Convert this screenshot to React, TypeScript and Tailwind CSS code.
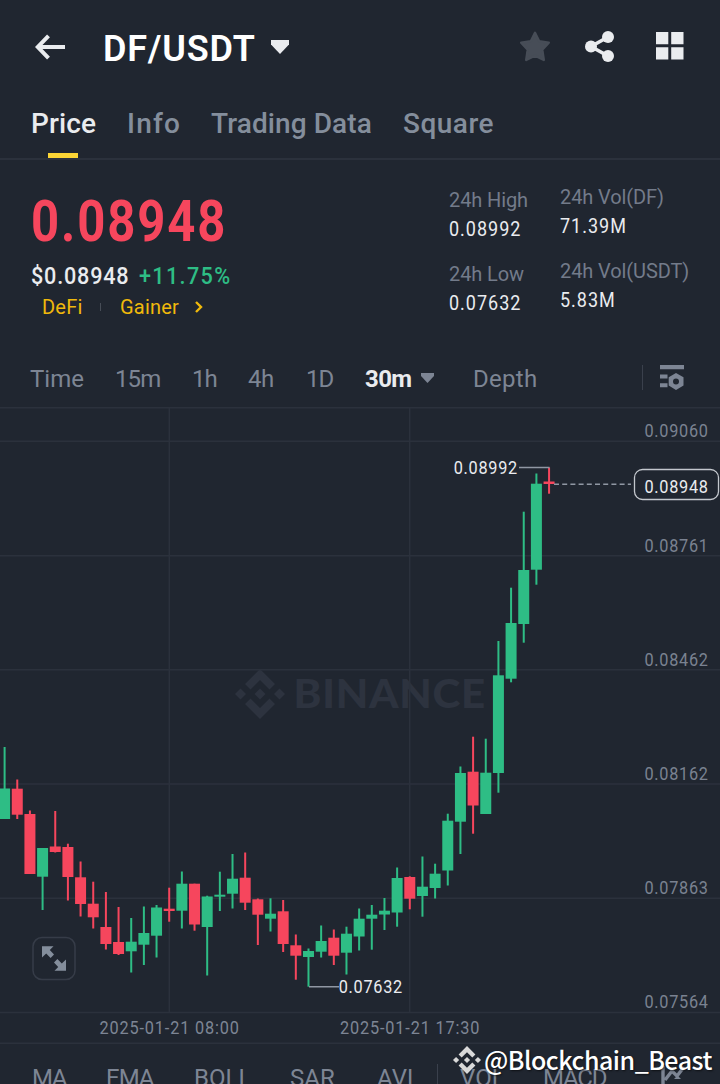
import React from "react";

const GREEN = "#2ebd85";
const RED = "#f6465d";

// direction, wick top, body top, body bottom, wick bottom
type Candle = ["g" | "r", number, number, number, number];

const candles: Candle[] = [
  ["g", 747, 788.5, 819, 819],
  ["r", 779.5, 788.7, 814.7, 819],
  ["r", 810.5, 814, 874, 874],
  ["g", 848, 848, 876.7, 910],
  ["r", 811, 846.5, 852, 852.5],
  ["r", 843.7, 847, 877, 900.5],
  ["r", 861.5, 877.3, 904, 916.5],
  ["r", 881.7, 903.7, 917.3, 928.5],
  ["r", 892, 927, 944, 949.5],
  ["r", 907, 942, 954, 955],
  ["g", 918, 941.7, 951.3, 972.5],
  ["g", 906.5, 933, 944.7, 965],
  ["g", 905, 907.5, 935.7, 957.5],
  ["r", 887.7, 908.7, 911, 921.7],
  ["g", 871.5, 883.7, 910.7, 928.5],
  ["r", 883.7, 883.7, 924.5, 930.7],
  ["g", 895.7, 896.5, 927, 975.5],
  ["g", 871.7, 894.7, 896.7, 911],
  ["g", 854, 878.7, 893.7, 908.5],
  ["r", 852.5, 877.7, 902.7, 910],
  ["r", 898.5, 899.3, 914.7, 945],
  ["g", 898.3, 913.7, 918.7, 931.5],
  ["r", 900, 911.3, 944, 952],
  ["r", 934.5, 945.3, 955.7, 979.7],
  ["g", 948.5, 951, 957, 986.7],
  ["g", 925.5, 941, 951.7, 957.5],
  ["r", 929.5, 937.7, 955.7, 965],
  ["g", 926.7, 933.7, 952.7, 974.5],
  ["g", 908.5, 918.7, 936.5, 950.5],
  ["g", 905, 914.7, 918.7, 949.7],
  ["g", 898, 910.7, 914.5, 930],
  ["g", 867.5, 878, 912.5, 926.7],
  ["r", 876.3, 877, 898.7, 909.3],
  ["g", 856.5, 886.7, 896, 916.7],
  ["g", 863.7, 873.7, 888, 898.5],
  ["g", 813.7, 820.7, 870.5, 885.5],
  ["g", 766.5, 773, 821.7, 854],
  ["r", 736.7, 771.7, 805.5, 833.7],
  ["g", 738.7, 772.7, 814, 814],
  ["g", 641, 675.3, 773, 792.7],
  ["g", 587.7, 623, 678.7, 682.3],
  ["g", 511.7, 570, 624, 642.7],
  ["g", 473.5, 483.7, 569.7, 584.7],
  ["r", 467.5, 481.5, 484, 493.7],
];

const priceLines = [
  { y: 441.3, label: "0.09060" },
  { y: 555.7, label: "0.08761" },
  { y: 669.8, label: "0.08462" },
  { y: 784, label: "0.08162" },
  { y: 898.3, label: "0.07863" },
  { y: 1012.5, label: "0.07564" },
];

function BinanceMark({ className }: { className?: string }) {
  return (
    <svg viewBox="0 0 50 50" className={className} fill="currentColor">
      <path d="M25 0 40 15 34.5 20.5 25 11 15.5 20.5 10 15Z" />
      <path d="M25 50 40 35 34.5 29.5 25 39 15.5 29.5 10 35Z" />
      <path d="M0 25 5.5 19.5 11 25 5.5 30.5Z" />
      <path d="M39 25 44.5 19.5 50 25 44.5 30.5Z" />
      <path d="M19.5 25 25 19.5 30.5 25 25 30.5Z" />
    </svg>
  );
}

function Header() {
  return (
    <div className="flex h-[94px] items-center pl-[35px] pr-[36px]">
      <svg width="30" height="26" viewBox="0 0 30 26" fill="none" stroke="#eaecef" strokeWidth="4">
        <path d="M30 13H3M13.5 1.8 2.7 13 13.5 24.2" />
      </svg>
      <h1 className="ml-[38px] w-[153px] whitespace-nowrap pt-[3px] text-[36px] font-semibold leading-[40px] tracking-[0.8px] text-white">
        DF/USDT
      </h1>
      <svg className="ml-[15px]" width="18" height="14" viewBox="0 0 18 14" fill="#eaecef">
        <path d="M0 0H18V4.5L9 14 0 4.5Z" />
      </svg>
      <div className="ml-auto flex items-center pb-[2px]">
        <svg width="30" height="31" viewBox="0 0 30 31" fill="#474d57" stroke="#474d57" strokeWidth="2.4" strokeLinejoin="round">
          <path d="M15 1.8 19.2 10.2 28.8 11.6 22.3 18.6 23.8 29 15 24.7 6.2 29 7.7 18.6 1.2 11.6 10.8 10.2Z" />
        </svg>
        <svg className="ml-[35px]" width="29" height="31" viewBox="0 0 29 31" fill="#eaecef">
          <path d="M23 6 6 15.5 23 25" fill="none" stroke="#eaecef" strokeWidth="3.6" />
          <circle cx="6" cy="15.5" r="6" />
          <circle cx="23" cy="6" r="6" />
          <circle cx="23" cy="25" r="6" />
        </svg>
        <svg className="ml-[42px]" width="28" height="28" viewBox="0 0 28 28" fill="#eaecef">
          <path d="M0 0H12.3V12.3H0ZM15.2 0H27.5V12.3H15.2ZM0 15.2H12.3V27.5H0ZM15.2 15.2H27.5V27.5H15.2Z" />
        </svg>
      </div>
    </div>
  );
}

function Tabs() {
  return (
    <div className="flex h-[66px] border-b-2 border-[#2b313c] pl-[31px] text-[28px] font-medium leading-[60px] text-[#848e9c]">
      <div className="flex w-[96px] flex-col text-[#eaecef]">
        <span className="h-[59px] tracking-[0.1px]">Price</span>
        <span className="ml-[17px] h-[6px] w-[30px] bg-[#fcd535]" />
      </div>
      <span className="w-[84px] tracking-[1.2px]">Info</span>
      <span className="w-[192px] whitespace-nowrap tracking-[0.1px]">Trading Data</span>
      <span className="tracking-[0.5px]">Square</span>
    </div>
  );
}

function Stat({ label, value }: { label: string; value: string }) {
  return (
    <div className="h-[74px] whitespace-nowrap">
      <div className="text-[20px] leading-[28px] tracking-[-0.1px] text-[#737b8a]">{label}</div>
      <div className="origin-left scale-x-90 text-[20px] leading-[30px] tracking-[1.1px] text-[#eaecef]">{value}</div>
    </div>
  );
}

function Summary() {
  return (
    <div className="flex h-[188px] pl-[31px]">
      <div className="w-[418px] whitespace-nowrap pt-[29px]">
        <div className="origin-left scale-x-[0.86] text-[57px] font-bold leading-[66px] tracking-[2.2px] text-[#f6465d]">
          0.08948
        </div>
        <div className="flex h-[42px] items-center text-[24px] font-medium">
          <span className="w-[108px] origin-left scale-x-90 tracking-[0.9px] text-[#eaecef]">$0.08948</span>
          <span className="origin-left scale-x-90 tracking-[1.5px] text-[#2ebd85]">+11.75%</span>
        </div>
        <div className="flex h-[20px] items-center pl-[11px] text-[20px] text-[#f0b90b]">
          <span className="w-[58px] tracking-[0.2px]">DeFi</span>
          <span className="h-[8px] w-px bg-[#474d57]" />
          <span className="ml-[19px] w-[75px] tracking-[0.2px]">Gainer</span>
          <svg width="8" height="12" viewBox="0 0 8 12" fill="none" stroke="#f0b90b" strokeWidth="2.4">
            <path d="M1 1 6 6 1 11" />
          </svg>
        </div>
      </div>
      <div className="w-[111px] pt-[26px]">
        <Stat label="24h High" value="0.08992" />
        <Stat label="24h Low" value="0.07632" />
      </div>
      <div className="pt-[23px]">
        <Stat label="24h Vol(DF)" value="71.39M" />
        <Stat label="24h Vol(USDT)" value="5.83M" />
      </div>
    </div>
  );
}

function Intervals() {
  return (
    <div className="flex h-[59px] items-center whitespace-nowrap pl-[30px] text-[24px] text-[#7d8594]">
      <span className="w-[85px] pt-[2px]">Time</span>
      <span className="w-[77px] pt-[2px] tracking-[-0.9px]">15m</span>
      <span className="w-[56px] pt-[2px] tracking-[-0.9px]">1h</span>
      <span className="w-[58px] pt-[2px] tracking-[-0.4px]">4h</span>
      <span className="w-[59px] pt-[2px] tracking-[-0.9px]">1D</span>
      <span className="w-[56px] pt-[2px] font-bold tracking-[-0.6px] text-[#eaecef]">30m</span>
      <svg width="13" height="10" viewBox="0 0 13 10" fill="#7d8594">
        <path d="M0 0H13V3L6.5 10 0 3Z" />
      </svg>
      <span className="ml-[39px] pt-[2px] tracking-[0.3px]">Depth</span>
      <span className="ml-auto h-[25px] w-px bg-[#3a404c]" />
      <svg className="ml-[17px] mr-[36px]" width="24" height="25" viewBox="0 0 24 25" fill="#7d8594">
        <path d="M0 0H24V4.2H0ZM0 9.5H7.5V13.5H0ZM0 18.2H7.5V22.2H0Z" />
        <path fillRule="evenodd" d="M16 8 23.5 12.2V20.6L16 25 8.7 20.6V12.2ZM16 13.5A3 3 0 1 0 16 19.5 3 3 0 1 0 16 13.5Z" />
      </svg>
    </div>
  );
}

type ChartLabelProps = { x: number; y: number; width: number; fill: string; children: string };

// condensed digits for the axes and markers
function ChartLabel({ x, y, width, fill, children }: ChartLabelProps) {
  return (
    <text transform={`translate(${x} ${y}) scale(0.88 1)`} fontSize="18.5" fill={fill} textLength={width / 0.88}>
      {children}
    </text>
  );
}

function Chart() {
  return (
    <div className="relative h-[637px]">
      <div className="absolute left-[235px] top-[262px] text-[#2d333f]">
        <BinanceMark className="h-[50px] w-[50px]" />
      </div>
      <svg width="720" height="637" viewBox="0 407 720 637" className="relative block" fontFamily="Roboto, sans-serif">
        <text
          transform="translate(293.5 708.3) scale(1.08 1)"
          fontFamily="Lato, sans-serif"
          fontWeight="900"
          fontSize="39"
          fill="#2d333f"
          textLength="177.5"
        >
          BINANCE
        </text>
        <g stroke="#2b313c" strokeWidth="1.5">
          <path d="M0 407.7H720M0 1043.2H720" />
          <path d="M169.3 408V1012M409.7 408V1012" />
          {priceLines.map((line) => (
            <path key={line.label} d={`M0 ${line.y}H720`} />
          ))}
        </g>
        {priceLines.map((line) => (
          <ChartLabel key={line.label} x={644.5} y={line.y - 4.1} width={63.5} fill="#7a8291">
            {line.label}
          </ChartLabel>
        ))}

        {candles.map(([dir, high, top, bottom, low], i) => {
          const cx = 4.6 + i * 12.662;
          return (
            <g key={i} fill={dir === "g" ? GREEN : RED}>
              <rect x={cx - 1} y={high} width="2" height={low - high} />
              <rect x={cx - 5.5} y={top} width="11" height={bottom - top} />
            </g>
          );
        })}

        {/* high / low markers */}
        <g fill="none" stroke="#9097a3" strokeWidth="1.5">
          <path d="M519 467.5H549.5M309 986.7H339" />
          <path d="M554 484.3H631" strokeDasharray="5 3.2" />
        </g>
        <ChartLabel x={453.7} y={474.4} width={63.5} fill="#eaecef">0.08992</ChartLabel>
        <ChartLabel x={338.7} y={993.4} width={63.5} fill="#eaecef">0.07632</ChartLabel>
        <rect x="634.5" y="469.5" width="84" height="30" rx="8" fill="#202630" stroke="#c3c7cd" strokeWidth="1.3" />
        <ChartLabel x={644.5} y={493.4} width={63.5} fill="#eaecef">0.08948</ChartLabel>

        <ChartLabel x={99.5} y={1034.4} width={139.5} fill="#7d8594">2025-01-21 08:00</ChartLabel>
        <ChartLabel x={340} y={1034.4} width={139.5} fill="#7d8594">2025-01-21 17:30</ChartLabel>

        {/* fullscreen button */}
        <rect x="33" y="937.5" width="42" height="42" rx="9" fill="#202630" stroke="#363c48" strokeWidth="1.5" />
        <g fill="#848e9c">
          <path d="M42 946.3H53.5L49.8 950 54 954.6 50.6 958 46.2 953.6 42 957.5Z" />
          <path d="M66 970.7H54.5L58.2 967 54 962.4 57.4 959 61.8 963.4 66 959.5Z" />
        </g>
      </svg>
    </div>
  );
}

function Indicators() {
  return (
    <div className="relative flex h-[40px] overflow-hidden whitespace-nowrap pl-[32px] pt-[20px] text-[24px] leading-[28px] text-[#7d8594]">
      <span className="w-[74px] tracking-[-1.5px]">MA</span>
      <span className="w-[88px] tracking-[-1px]">EMA</span>
      <span className="w-[96px]">BOLL</span>
      <span className="w-[87px]">SAR</span>
      <span className="w-[60px]">AVL</span>
      <span className="h-[26px] w-px bg-[#3a404c]" />
      <span className="ml-[22px] w-[83px]">VOL</span>
      <span className="w-[118px] tracking-[-1.2px]">MACD</span>
      <svg width="26" height="26" viewBox="0 0 26 26" fill="none" stroke="#7d8594" strokeWidth="3.4">
        <path d="M2 2V24H24M4 16 11 7 16 12 23 3" />
        <path d="M13 15 16.5 11.5 20 15Z" fill="#7d8594" stroke="none" />
      </svg>
    </div>
  );
}

function App() {
  return (
    <div className="relative h-[1084px] w-[720px] overflow-hidden bg-[#202630] font-[Roboto,sans-serif]">
      <Header />
      <Tabs />
      <Summary />
      <Intervals />
      <Chart />
      <Indicators />
      {/* author tag over the indicator bar */}
      <div className="absolute left-[453px] top-[1043px] flex items-center text-white">
        <BinanceMark className="h-[28px] w-[28px] text-[#d9d9d9]" />
        <span className="ml-[3px] pb-[2px] font-['Noto_Sans_CJK_SC',sans-serif] text-[25px] font-medium leading-[32px] tracking-[-0.5px] [text-shadow:1px_1px_2px_rgba(0,0,0,0.6)]">
          @Blockchain_Beast
        </span>
      </div>
    </div>
  );
}

export default App;
